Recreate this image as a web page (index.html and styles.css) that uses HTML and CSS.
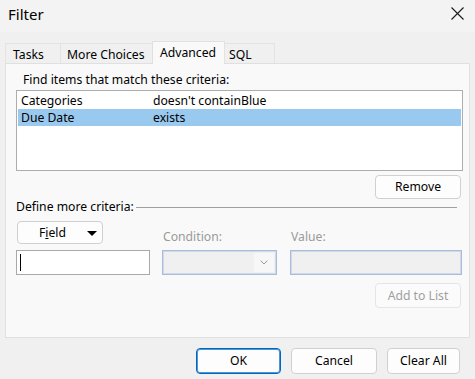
FILE: index.html
```html
<!DOCTYPE html>
<html>
<head>
<meta charset="utf-8">
<link rel="stylesheet" href="styles.css">
</head>
<body>
<div class="dialog">
  <div class="titlebar">
    <span class="title">Filter</span>
    <svg class="close" width="13" height="13" viewBox="0 0 13 13"><path d="M0.5 0.5 L12.5 12.5 M12.5 0.5 L0.5 12.5" stroke="#1a1a1a" stroke-width="1.1" fill="none"/></svg>
  </div>
  <div class="body">
    <div class="tabs">
      <div class="tab t-tasks">Tasks</div>
      <div class="tab t-more">More Choices</div>
      <div class="tab t-adv active">Advanced</div>
      <div class="tab t-sql">SQL</div>
    </div>
    <div class="pane">
      <div class="label">Find items that match these criteria:</div>
      <div class="list">
        <div class="row"><span class="c1">Categories</span><span>doesn't containBlue</span></div>
        <div class="row sel"><span class="c1">Due Date</span><span>exists</span></div>
      </div>
      <div class="btnrow"><button class="btn">Remove</button></div>
      <div class="group"><span>Define more criteria:</span><span class="rule"></span></div>
      <div class="grid">
        <button class="fieldbtn"><span>F<u>i</u>eld</span><svg width="10" height="5" viewBox="0 0 10 5"><path d="M0 0 H10 L5 5 Z" fill="#000"/></svg></button>
        <div class="dim">Condition:</div>
        <div class="dim">Value:</div>
        <div class="input"><span class="caret"></span></div>
        <div class="combo"><span class="dd"><svg width="8" height="5" viewBox="0 0 8 5"><path d="M0.5 0.5 L4 4 L7.5 0.5" stroke="#9a9a9a" stroke-width="1" fill="none"/></svg></span></div>
        <div class="valbox"></div>
      </div>
      <div class="btnrow add"><button class="btn disabled">Add to List</button></div>
    </div>
    <div class="footer">
      <button class="btn big default">OK</button>
      <button class="btn big">Cancel</button>
      <button class="btn big clear">Clear All</button>
    </div>
  </div>
</div>
</body>
</html>
```
FILE: styles.css
```css
* { box-sizing: border-box; }
html, body { margin: 0; padding: 0; }
body {
  width: 475px;
  height: 379px;
  overflow: hidden;
  background: #f0f0f0;
  font-family: "Noto Sans", "Open Sans", sans-serif;
  font-size: 12.2px;
  color: #000;
}
.dialog { width: 475px; height: 379px; display: flex; flex-direction: column; }
.titlebar {
  height: 32px;
  background: #f3f3f3;
  display: flex;
  align-items: center;
  justify-content: space-between;
  padding: 0 11px 0 8px;
}
.title { font-size: 15px; line-height: 20px; margin-top: -5px; }
.close { margin-top: -6px; }
.body { flex: 1; display: flex; flex-direction: column; }
.tabs {
  display: flex;
  align-items: flex-end;
  height: 31px;
  padding-left: 5px;
  position: relative;
  z-index: 1;
}
.tab {
  height: 20px;
  border: 1px solid #e3e3e3;
  border-bottom: none;
  background: #f0f0f0;
  margin-left: -1px;
  padding: 3px 0 0 7px;
  line-height: 16px;
  white-space: nowrap;
}
.t-tasks { width: 56px; margin-left: 0; }
.t-more { width: 93px; padding-left: 6px; }
.t-adv { width: 73px; }
.t-sql { width: 51px; padding-left: 4px; }
.tab.active {
  height: 23px;
  margin-bottom: -1px;
  background: #f9f9f9;
  border-color: #e0e0e0;
}
.pane {
  margin: 0 5px;
  height: 275px;
  background: #f9f9f9;
  border: 1px solid #e0e0e0;
  padding: 0 6px 0 10px;
  display: flex;
  flex-direction: column;
}
.label { margin-top: 8px; line-height: 16px; padding-left: 7px; }
.list {
  margin-top: 2px;
  height: 81px;
  background: #fff;
  border: 1px solid #adadad;
  padding: 1px;
}
.row { height: 17px; line-height: 17px; padding-left: 3px; display: flex; white-space: nowrap; }
.row.sel { background: #99c9ef; }
.c1 { width: 132px; }
.btnrow { display: flex; justify-content: flex-end; padding-right: 2px; margin-top: 4px; }
.btnrow.add { margin-top: 8px; }
.btn {
  font-family: inherit;
  font-size: 12.2px;
  color: #000;
  width: 86px;
  height: 24px;
  background: #fdfdfd;
  border: 1px solid #d0d0d0;
  border-radius: 4px;
  padding: 0;
  line-height: 20px;
}
.btn.disabled { color: #a0a0a0; border-color: #e5e5e5; background: #fbfbfb; height: 25px; }
.group { display: flex; align-items: center; line-height: 16px; white-space: nowrap; }
.rule { flex: 1; height: 1px; background: #a0a0a0; margin: 1px 6px 0 2px; }
.grid {
  margin-top: 6px;
  display: grid;
  grid-template-columns: 134px 116px 172px;
  grid-template-rows: 24px 25px;
  column-gap: 12px;
  row-gap: 5px;
}
.fieldbtn {
  font-family: inherit;
  font-size: 12.2px;
  color: #000;
  width: 86px;
  height: 23px;
  margin-left: 1px;
  align-self: start;
  background: #fdfdfd;
  border: 1px solid #d0d0d0;
  border-radius: 4px;
  display: flex;
  align-items: center;
  justify-content: space-between;
  padding: 0 5px 0 21px;
  line-height: 16px;
}
.fieldbtn svg { margin-top: 2px; }
.dim { color: #9a9a9a; align-self: end; line-height: 16px; padding-left: 1px; }
.input {
  background: #fff;
  border: 1px solid #a9a9a9;
  display: flex;
  align-items: center;
  padding-left: 3px;
}
.caret { width: 1px; height: 17px; background: #000; }
.combo {
  width: 115px;
  background: #f0f0f0;
  border: 1px solid #a8bdd8;
  box-shadow: inset 0 0 0 1px #cfdbea;
  display: flex;
  justify-content: flex-end;
  padding: 2px;
}
.dd {
  width: 20px;
  background: #f7f7f7;
  display: flex;
  align-items: center;
  justify-content: center;
}
.valbox {
  background: #f0f0f0;
  border: 1px solid #a8bdd8;
  box-shadow: inset 0 0 0 1px #cfdbea;
}
.footer {
  display: flex;
  justify-content: flex-end;
  gap: 10px;
  padding: 10px 15px 0 0;
}
.btn.big { height: 26px; width: 86px; }
.btn.default { width: 85px; border-color: #0067c0; box-shadow: inset 0 0 0 1px #4d95d4; }
.btn.clear { width: 73px; }
```
